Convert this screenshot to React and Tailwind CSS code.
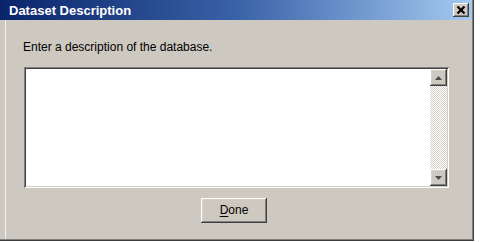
import React from "react";

const raised =
  "shadow-[inset_-1px_-1px_#404040,inset_1px_1px_#ffffff,inset_-2px_-2px_#808080,inset_2px_2px_#d4d0c8]";
const sunken =
  "shadow-[inset_1px_1px_#808080,inset_-1px_-1px_#ffffff,inset_2px_2px_#404040,inset_-2px_-2px_#d4d0c8]";

const Arrow = ({ down }) => (
  <svg width="7" height="4" viewBox="0 0 7 4" className={down ? "" : "rotate-180"}>
    <path d="M0 0h7L3.5 4z" fill="#4a4a4a" />
  </svg>
);

const ScrollButton = ({ down }) => (
  <div className={`w-[17px] h-[17px] bg-[#cdc9c0] flex items-center justify-center ${raised}`}>
    <Arrow down={down} />
  </div>
);

export default function App() {
  return (
    <div className="w-[480px] h-[242px] bg-white font-['Liberation_Sans',Arial,sans-serif] text-black overflow-hidden">
      <div className="w-[474px] h-[241px] border-r border-b border-[#404040]">
        <div className="h-full flex flex-col border-r border-b border-[#808080] bg-[#cdc9c0]">
          {/* Title bar */}
          <div className="h-[20px] flex items-center bg-gradient-to-r from-[#0a246a] via-[#3a62a8] to-[#a6caf0] pl-[9px] pr-[3px]">
            <span className="flex-1 text-white font-bold text-[13px] leading-[20px] pt-[1px]">
              Dataset Description
            </span>
            <div className={`w-[16px] h-[14px] bg-[#cdc9c0] flex items-center justify-center ${raised}`}>
              <svg width="10" height="8" viewBox="0 0 10 8">
                <path d="M1.5 0.5l7 7M8.5 0.5l-7 7" stroke="#000" strokeWidth="2.2" />
              </svg>
            </div>
          </div>

          {/* Body */}
          <div className="flex-1 ml-[5px] border-l border-[#f4f3ee] flex flex-col pl-[18px]">
            <div className="mt-[20px] -ml-[1px] text-[12px] leading-[14px]">
              Enter a description of the database.
            </div>
            <div className={`mt-[13px] w-[425px] h-[121px] bg-white p-[2px] flex ${sunken}`}>
              <div className="flex-1" />
              <div className="w-[17px] flex flex-col bg-[repeating-conic-gradient(#d4d0c8_0_25%,#ffffff_0_50%)] bg-[length:2px_2px]">
                <ScrollButton />
                <div className="flex-1" />
                <ScrollButton down />
              </div>
            </div>
            <div className="mt-[9px] ml-[177px]">
              <button className={`w-[66px] h-[25px] bg-[#cdc9c0] text-[12px] leading-[14px] ${raised}`}>
                <span className="underline underline-offset-2">D</span>one
              </button>
            </div>
          </div>
        </div>
      </div>
    </div>
  );
}
